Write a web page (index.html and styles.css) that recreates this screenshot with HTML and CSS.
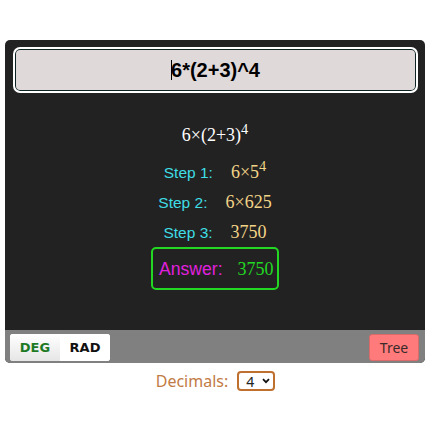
FILE: index.html
```html
<!DOCTYPE html>
<html>
<head>
<meta charset="utf-8">
<link rel="stylesheet" href="styles.css">
</head>
<body>
<div class="calc">
  <div class="input-wrap">
    <div class="expr"><span class="caret"></span>6*(2+3)^4</div>
  </div>
  <div class="result">
    <div class="formula">6×(2+3)<sup>4</sup></div>
    <div class="step"><span class="label">Step 1:</span><span class="val">6×5<sup>4</sup></span></div>
    <div class="step"><span class="label">Step 2:</span><span class="val">6×625</span></div>
    <div class="step"><span class="label">Step 3:</span><span class="val">3750</span></div>
    <div class="answer"><span class="alabel">Answer:</span><span class="aval">3750</span></div>
  </div>
  <div class="bar">
    <div class="toggle"><span class="deg">DEG</span><span class="rad">RAD</span></div>
    <button class="tree">Tree</button>
  </div>
</div>
<div class="decimals">
  <span class="dlabel">Decimals:</span>
  <span class="select"><span class="sval">4</span><svg class="chev" width="8" height="6" viewBox="0 0 8 6"><path d="M1 1.2 L4 4.2 L7 1.2" fill="none" stroke="#111" stroke-width="1.8"/></svg></span>
</div>
</body>
</html>
```
FILE: styles.css
```css
body {
  margin: 0;
  background: #fff;
  font-family: "Liberation Sans", Arial, sans-serif;
}
.calc {
  margin: 40px 6px 0 5px;
  background: #222222;
  border-radius: 5px;
  overflow: hidden;
}
.input-wrap {
  padding: 7px 7px 0 8px;
}
.expr {
  box-sizing: border-box;
  height: 46px;
  border: 2px solid #ffffff;
  border-radius: 7px;
  box-shadow: inset 0 0 0 1px #0e2424;
  background: #e0d9da;
  color: #000;
  font: bold 20px/42px "Liberation Sans", Arial, sans-serif;
  text-align: center;
}
.caret {
  display: inline-block;
  width: 1px;
  height: 20px;
  background: #000;
  vertical-align: -3px;
  margin-right: -1px;
}
.result {
  height: 237px;
  box-sizing: border-box;
  padding-top: 27px;
  display: flex;
  flex-direction: column;
  align-items: center;
}
.formula {
  font: 18px/30px "Liberation Serif", "Times New Roman", serif;
  color: #ffffff;
  margin-bottom: 7px;
}
sup {
  font-size: 0.8em;
  line-height: 0;
  vertical-align: 0.5em;
}
.step {
  display: flex;
  align-items: baseline;
  gap: 18px;
  height: 30px;
}
.label {
  font: 15.5px/30px "Liberation Sans", Arial, sans-serif;
  color: #3fdde6;
}
.val {
  font: 18px/30px "Liberation Serif", "Times New Roman", serif;
  color: #f2d488;
}
.answer {
  display: flex;
  align-items: baseline;
  gap: 15px;
  width: 128px;
  height: 43px;
  box-sizing: border-box;
  border: 2px solid #22d822;
  border-radius: 5px;
  padding: 5px 4px 4px 6px;
}
.alabel {
  font: 17.6px/30px "Liberation Sans", Arial, sans-serif;
  color: #e020df;
}
.aval {
  font: 18px/30px "Liberation Serif", "Times New Roman", serif;
  color: #22d822;
}
.bar {
  height: 33px;
  box-sizing: border-box;
  background: #808080;
  display: flex;
  justify-content: space-between;
  align-items: flex-start;
  padding: 4px 6px 0 5px;
}
.toggle {
  display: flex;
  height: 27px;
  background: #fff;
  border-radius: 3px;
  overflow: hidden;
  font: bold 13px "DejaVu Sans", Verdana, sans-serif;
}
.deg, .rad {
  width: 50px;
  display: flex;
  align-items: center;
  justify-content: center;
}
.deg {
  color: #1e7a25;
  background: linear-gradient(#ffffff, #e6e6e6);
  box-shadow: 1px 0 2px rgba(0,0,0,0.2);
}
.rad {
  color: #111;
  background: #fff;
}
.tree {
  width: 50px;
  height: 27px;
  border: 1px solid #d86a6a;
  border-radius: 3px;
  background: #ff7b7b;
  color: #3a2a2a;
  font: 14px "Noto Sans", "DejaVu Sans", sans-serif;
  padding: 0;
}
.decimals {
  margin-top: 8px;
  display: flex;
  justify-content: center;
  align-items: center;
  gap: 9px;
  height: 20px;
}
.dlabel {
  font: 16px "Noto Sans", "DejaVu Sans", sans-serif;
  color: #c27a44;
}
.select {
  box-sizing: border-box;
  width: 38px;
  height: 20px;
  border: 2px solid #c0702e;
  border-radius: 4px;
  display: flex;
  align-items: center;
  padding-left: 7px;
  gap: 8px;
  background: #fff;
}
.sval {
  font: 14px "Noto Sans", "DejaVu Sans", sans-serif;
  color: #222;
}
.chev {
  display: block;
}
```
